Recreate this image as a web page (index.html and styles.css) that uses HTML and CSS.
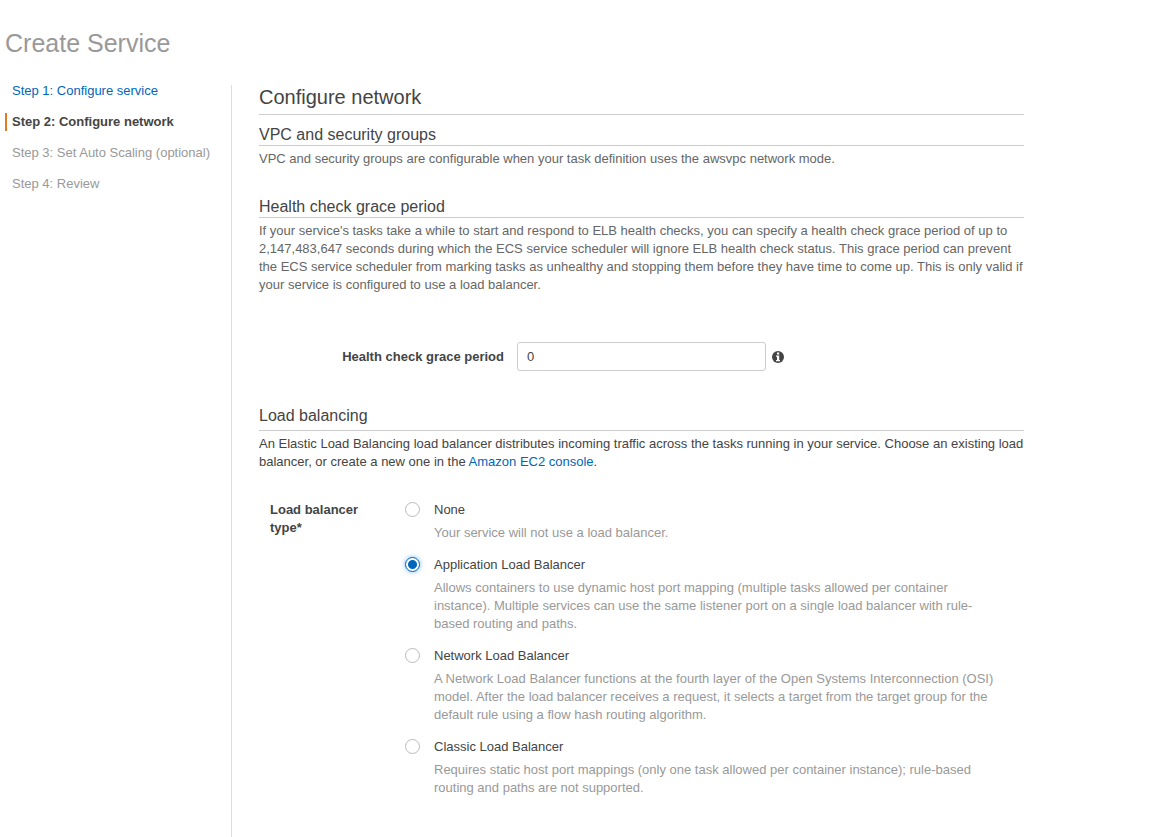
FILE: index.html
```
<!DOCTYPE html>
<html lang="en">
<head>
    <meta charset="UTF-8">
    <meta name="viewport" content="width=device-width, initial-scale=1.0">
    <title>Create Service</title>
    <link rel="stylesheet" href="styles.css">
</head>
<body>
    <h1>Create Service</h1>
    <div class="wizard">
        <nav class="steps">
            <ol>
                <li><a href="#">Step 1: Configure service</a></li>
                <li class="current">Step 2: Configure network</li>
                <li>Step 3: Set Auto Scaling (optional)</li>
                <li>Step 4: Review</li>
            </ol>
        </nav>
        <main class="content">
            <h2>Configure network</h2>

            <section class="block">
                <h3>VPC and security groups</h3>
                <p class="muted">VPC and security groups are configurable when your task definition uses the awsvpc network mode.</p>
            </section>

            <section class="block">
                <h3>Health check grace period</h3>
                <p class="muted">If your service's tasks take a while to start and respond to ELB health checks, you can specify a health check grace period of up to 2,147,483,647 seconds during which the ECS service scheduler will ignore ELB health check status. This grace period can prevent the ECS service scheduler from marking tasks as unhealthy and stopping them before they have time to come up. This is only valid if your service is configured to use a load balancer.</p>
                <div class="field">
                    <label for="grace-period">Health check grace period</label>
                    <input type="text" id="grace-period" value="0">
                    <svg class="info" viewBox="0 0 12 12" role="img" aria-label="Info">
                        <circle cx="6" cy="6" r="6" fill="#444"/>
                        <path d="M5 1.5h2.2v2H5zM4 4.5h3.2V9H8v1.2H4V9h1V5.7H4z" fill="#fff"/>
                    </svg>
                </div>
            </section>

            <section class="block">
                <h3 class="spaced">Load balancing</h3>
                <p>An Elastic Load Balancing load balancer distributes incoming traffic across the tasks running in your service. Choose an existing load balancer, or create a new one in the <a href="#">Amazon EC2 console</a>.</p>
                <div class="balancer" role="radiogroup" aria-labelledby="balancer-label">
                    <div class="balancer-label" id="balancer-label">Load balancer type*</div>
                    <div class="options">
                        <div class="option">
                            <input type="radio" name="balancer" id="lb-none">
                            <div>
                                <label for="lb-none">None</label>
                                <p>Your service will not use a load balancer.</p>
                            </div>
                        </div>
                        <div class="option">
                            <input type="radio" name="balancer" id="lb-application" checked>
                            <div>
                                <label for="lb-application">Application Load Balancer</label>
                                <p>Allows containers to use dynamic host port mapping (multiple tasks allowed per container instance). Multiple services can use the same listener port on a single load balancer with rule-based routing and paths.</p>
                            </div>
                        </div>
                        <div class="option">
                            <input type="radio" name="balancer" id="lb-network">
                            <div>
                                <label for="lb-network">Network Load Balancer</label>
                                <p>A Network Load Balancer functions at the fourth layer of the Open Systems Interconnection (OSI) model. After the load balancer receives a request, it selects a target from the target group for the default rule using a flow hash routing algorithm.</p>
                            </div>
                        </div>
                        <div class="option">
                            <input type="radio" name="balancer" id="lb-classic">
                            <div>
                                <label for="lb-classic">Classic Load Balancer</label>
                                <p>Requires static host port mappings (only one task allowed per container instance); rule-based routing and paths are not supported.</p>
                            </div>
                        </div>
                    </div>
                </div>
            </section>
        </main>
    </div>
</body>
</html>
```
FILE: styles.css
```
:root {
    --text: #444;
    --muted: #666;
    --light: #999;
    --link: #0066bb;
    --accent: #e47923;
    --line: #ccc;
}

* {
    margin: 0;
    padding: 0;
    box-sizing: border-box;
}

body {
    display: flex;
    flex-direction: column;
    min-height: 100vh;
    padding: 28px 5px 0;
    background-color: #fff;
    color: var(--text);
    font-family: "Liberation Sans", Arial, sans-serif;
    font-size: 13px;
    line-height: 18px;
}

a {
    color: var(--link);
    text-decoration: none;
}

a:hover {
    text-decoration: underline;
}

h1,
h2,
h3 {
    font-weight: normal;
}

h1 {
    margin-bottom: 27px;
    color: var(--light);
    font-size: 25px;
    line-height: 30px;
}

.wizard {
    display: flex;
    flex: 1;
}

.steps {
    flex: 0 0 227px;
    border-right: 1px solid #ddd;
}

.steps ol {
    display: flex;
    flex-direction: column;
    gap: 13px;
    margin-top: -3px;
    list-style: none;
}

.steps li {
    padding-left: 5px;
    border-left: 2px solid transparent;
    color: var(--light);
}

.steps .current {
    border-left-color: var(--accent);
    color: var(--text);
    font-weight: bold;
}

.content {
    flex: 1;
    max-width: 792px;
    padding: 0 0 10px 27px;
}

h2 {
    padding-bottom: 5px;
    border-bottom: 1px solid var(--line);
    font-size: 20px;
    line-height: 24px;
}

h3 {
    margin-bottom: 4px;
    border-bottom: 1px solid var(--line);
    font-size: 16px;
    line-height: 20px;
}

h3.spaced {
    padding-bottom: 4px;
}

.block {
    margin-bottom: 29px;
}

.block:last-child {
    margin-bottom: 0;
}

h2 + .block {
    margin-top: 10px;
}

.muted {
    color: var(--muted);
}

.field {
    display: flex;
    align-items: center;
    margin: 48px 0 35px;
}

.field label {
    flex: 0 0 258px;
    padding-right: 13px;
    font-weight: bold;
    text-align: right;
}

.field input {
    width: 249px;
    height: 29px;
    margin-right: 6px;
    padding: 0 9px;
    border: 1px solid var(--line);
    border-radius: 3px;
    color: var(--text);
    font: inherit;
}

.info {
    width: 12px;
    height: 12px;
}

.balancer {
    display: flex;
    margin-top: 30px;
    padding: 0 24px 0 11px;
}

.balancer-label {
    flex: 0 0 135px;
    padding-right: 30px;
    font-weight: bold;
}

.options {
    display: flex;
    flex-direction: column;
    flex: 1;
    gap: 14px;
}

.option {
    display: flex;
    align-items: flex-start;
    gap: 14px;
}

.option label {
    display: block;
    margin-bottom: 5px;
}

.option p {
    color: var(--light);
}

.option input {
    flex: none;
    width: 15px;
    height: 15px;
    margin-top: 1px;
    border: 1px solid #bbb;
    border-radius: 50%;
    background-color: #fff;
    appearance: none;
}

.option input:checked {
    border-color: var(--link);
    background-image: radial-gradient(circle, var(--link) 4px, transparent 5px);
    box-shadow: 0 0 5px rgba(0, 115, 220, 0.5);
}
```
